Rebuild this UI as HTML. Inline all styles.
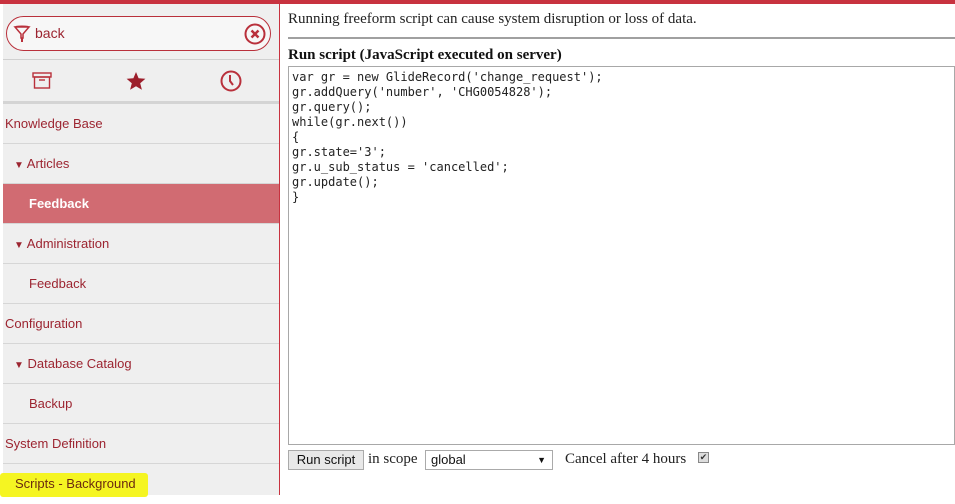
<!DOCTYPE html>
<html><head><style>
*{box-sizing:border-box;margin:0;padding:0}
body{width:955px;height:495px;overflow:hidden;background:#fff;position:relative;font-family:"Liberation Sans",sans-serif}
.top{position:absolute;left:0;top:0;width:955px;height:4px;background:#c8323f}
.side{position:absolute;left:3px;top:4px;width:277px;height:491px;background:#efefef;border-right:1px solid #c8323f}
.search{position:absolute;left:3px;top:12px;width:265px;height:35px;border:1.5px solid #b9303b;border-radius:18px;background:#f7f7f7}
.search span{position:absolute;left:28px;top:8px;font-size:14px;color:#9c2430}
.icons{position:absolute;left:0;top:55px;width:276px;height:45px;border-top:1px solid #d0d0d0;border-bottom:3px solid #d4d4d4}
.row{position:absolute;left:0;width:276px;height:40px;border-bottom:1px solid #d6d6d6;font-size:13px;color:#9c2430;line-height:40px;white-space:nowrap}
.sel{background:#d16b72;color:#fff;font-weight:bold}
.main{position:absolute;left:288px;top:0;width:667px;height:495px;font-family:"Liberation Serif",serif;white-space:nowrap}
pre{font-family:"DejaVu Sans Mono","Liberation Mono",monospace;font-size:12px;line-height:15px;color:#222}
</style></head><body>
<div class="top"></div>
<div class="side">
 <div class="search">
  <svg style="position:absolute;left:6px;top:7px" width="18" height="20" viewBox="0 0 18 20"><path d="M2 3h14L10 10v4H8v-4z M2 3c0-1 14-1 14 0" fill="none" stroke="#b9303b" stroke-width="1.5"/><rect x="8" y="14" width="2" height="4" fill="#b9303b"/></svg>
  <span>back</span>
  <svg style="position:absolute;right:4px;top:6px" width="22" height="22" viewBox="0 0 22 22"><circle cx="11" cy="11" r="9.5" fill="none" stroke="#b9303b" stroke-width="2"/><path d="M7.5 7.5l7 7M14.5 7.5l-7 7" stroke="#b9303b" stroke-width="2.5"/></svg>
 </div>
 <div class="icons">
  <svg style="position:absolute;left:29px;top:12px" width="20" height="18" viewBox="0 0 20 18"><rect x="1" y="1" width="18" height="4" fill="none" stroke="#b9303b" stroke-width="1.4"/><rect x="2.5" y="5" width="15" height="11" fill="none" stroke="#b9303b" stroke-width="1.4"/><path d="M7 8h6" stroke="#b9303b" stroke-width="1.4"/></svg>
  <svg style="position:absolute;left:123px;top:12px" width="20" height="19" viewBox="0 0 20 19"><path d="M10 0l2.6 6.3 6.8.5-5.2 4.4 1.7 6.6L10 14.2 4.1 17.8l1.7-6.6L.6 6.8l6.8-.5z" fill="#9c1e2b"/></svg>
  <svg style="position:absolute;left:217px;top:10px" width="22" height="22" viewBox="0 0 22 22"><circle cx="11" cy="11" r="9.5" fill="none" stroke="#b9303b" stroke-width="2"/><path d="M10 5v6l3 4" fill="none" stroke="#b9303b" stroke-width="2"/></svg>
 </div>
 <div class="row" style="top:100px;padding-left:2px">Knowledge Base</div>
 <div class="row" style="top:140px;padding-left:11px"><span style="font-size:10px">▼</span> Articles</div>
 <div class="row sel" style="top:180px;padding-left:26px">Feedback</div>
 <div class="row" style="top:220px;padding-left:11px"><span style="font-size:10px">▼</span> Administration</div>
 <div class="row" style="top:260px;padding-left:26px">Feedback</div>
 <div class="row" style="top:300px;padding-left:2px">Configuration</div>
 <div class="row" style="top:340px;padding-left:11px"><span style="font-size:10px">▼</span> Database Catalog</div>
 <div class="row" style="top:380px;padding-left:26px">Backup</div>
 <div class="row" style="top:420px;padding-left:2px">System Definition</div>
 <div class="row" style="top:460px;padding-left:12px;border:none;color:#6a2a10"><span style="background:#f5f522;position:absolute;left:-3px;top:9px;width:148px;height:24px;border-radius:3px"></span><span style="position:relative">Scripts - Background</span></div>
</div>
<div class="main">
 <div style="position:absolute;left:0;top:11px;font-size:15px;color:#222">Running freeform script can cause system disruption or loss of data.</div>
 <div style="position:absolute;left:0;top:37px;width:667px;height:2px;background:#a0a0a0"></div>
 <div style="position:absolute;left:0;top:47px;font-size:15px;font-weight:bold;color:#111">Run script (JavaScript executed on server)</div>
 <div style="position:absolute;left:0;top:66px;width:667px;height:379px;border:1px solid #a8a8a8;padding:3px 3px">
<pre>var gr = new GlideRecord('change_request');
gr.addQuery('number', 'CHG0054828');
gr.query();
while(gr.next())
{
gr.state='3';
gr.u_sub_status = 'cancelled';
gr.update();
}</pre>
 </div>
 <div style="position:absolute;left:0;top:450px;width:76px;height:20px;border:1px solid #aaa;background:#e8e8e8;font-family:'Liberation Sans',sans-serif;font-size:13px;line-height:18px;text-align:center;color:#111">Run script</div>
 <div style="position:absolute;left:80px;top:451px;font-size:15px;color:#222">in scope</div>
 <div style="position:absolute;left:137px;top:450px;width:128px;height:20px;border:1px solid #aaa;background:#fff;font-family:'Liberation Sans',sans-serif;font-size:13px;line-height:18px;padding-left:5px;color:#111">global<span style="position:absolute;right:6px;font-size:9px">▼</span></div>
 <div style="position:absolute;left:277px;top:451px;font-size:15px;color:#222">Cancel after 4 hours</div>
 <div style="position:absolute;left:410px;top:452px;width:11px;height:11px;border:1px solid #888;background:#ddd;font-size:9px;line-height:9px;text-align:center;color:#333">✔</div>
</div>
</body></html>
